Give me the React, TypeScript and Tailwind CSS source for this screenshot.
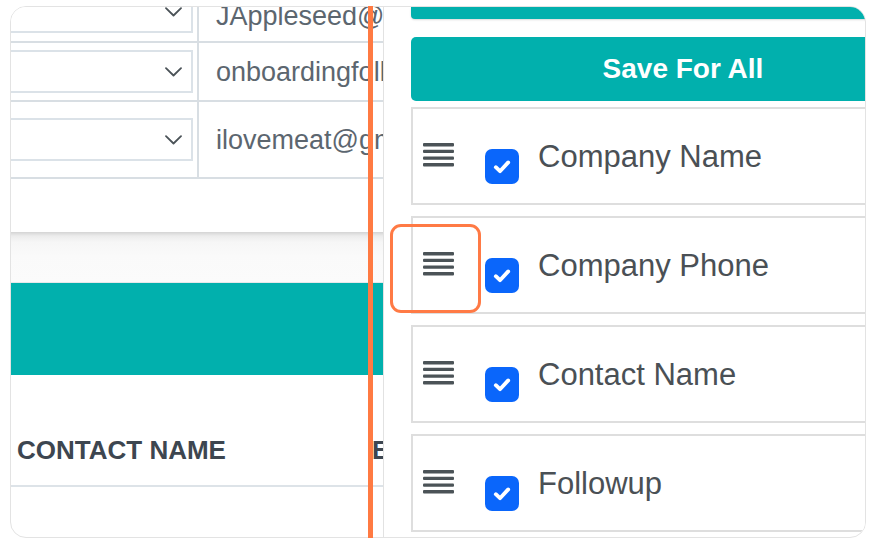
import React from "react";

const FONT = { fontFamily: '"Liberation Sans", Arial, sans-serif' };

function Chevron() {
  return (
    <svg width="17" height="10" viewBox="0 0 17 10" fill="none">
      <path d="M1 1.2 L8.5 8.5 L16 1.2" stroke="#4b5358" strokeWidth="1.8" strokeLinecap="round" strokeLinejoin="round" />
    </svg>
  );
}

function DragIcon() {
  return (
    <svg width="31" height="24" viewBox="0 0 31 24">
      <rect x="0" y="0" width="31" height="3.4" rx="1" fill="#4b5357" />
      <rect x="0" y="6.7" width="31" height="3.4" rx="1" fill="#4b5357" />
      <rect x="0" y="13.4" width="31" height="3.4" rx="1" fill="#4b5357" />
      <rect x="0" y="20.1" width="31" height="3.4" rx="1" fill="#4b5357" />
    </svg>
  );
}

function Check() {
  return (
    <div className="w-[34px] h-[35px] rounded-[7px] bg-[#0a66fb] flex items-center justify-center shrink-0">
      <svg width="34" height="35" viewBox="0 0 34 35" fill="none">
        <path d="M10.8 18.2 L15 22.2 L23.2 13.4" stroke="#ffffff" strokeWidth="3.8" strokeLinecap="round" strokeLinejoin="round" />
      </svg>
    </div>
  );
}

function SelectBox({ extra }: { extra: string }) {
  return (
    <div className={"w-[182px] h-[43px] border-2 border-l-0 border-[#dbe2e8] bg-white flex items-center justify-end pr-[9px] " + extra}>
      <Chevron />
    </div>
  );
}

function Item({ label }: { label: string }) {
  return (
    <div className="h-[98px] w-[480px] border-2 border-[#dedede] bg-white flex items-start pl-[10px]">
      <div className="mt-[34px]">
        <DragIcon />
      </div>
      <div className="ml-[31px] mt-[40px]">
        <Check />
      </div>
      <div className="ml-[19px] mt-[31px] text-[31px] leading-[34px] text-[#4a5055] whitespace-nowrap">{label}</div>
    </div>
  );
}

export default function App() {
  return (
    <div className="w-[871px] h-[547px] bg-white relative overflow-hidden pt-[6px] pl-[10px]" style={FONT}>
      <div className="w-[856px] h-[532px] border border-[#e3e3e3] rounded-[16px] overflow-hidden flex bg-white">
        {/* Left panel */}
        <div className="w-[372px] shrink-0 flex flex-col overflow-hidden">
          {/* Row 1 */}
          <div className="h-[36px] border-b-2 border-[#d8dee3] flex overflow-hidden shrink-0">
            <div className="w-[186px] shrink-0">
              <SelectBox extra="-mt-[17px]" />
            </div>
            <div className="border-l-2 border-[#d8dee3] pl-[17px] flex-1 overflow-hidden whitespace-nowrap text-[27px] leading-[30px] text-[#5c666f]">
              <div className="-mt-[6px]">JAppleseed@gmail.com</div>
            </div>
          </div>
          {/* Row 2 */}
          <div className="h-[59px] border-b-2 border-[#d8dee3] flex items-stretch overflow-hidden shrink-0">
            <div className="w-[186px] shrink-0 flex items-center">
              <SelectBox extra="" />
            </div>
            <div className="border-l-2 border-[#d8dee3] pl-[17px] flex-1 overflow-hidden whitespace-nowrap text-[27px] leading-[30px] text-[#5c666f] flex items-center">
              onboardingfollowup@gmail.com
            </div>
          </div>
          {/* Row 3 */}
          <div className="h-[77px] border-b-2 border-[#d8dee3] flex items-stretch overflow-hidden shrink-0">
            <div className="w-[186px] shrink-0 flex items-center">
              <SelectBox extra="" />
            </div>
            <div className="border-l-2 border-[#d8dee3] pl-[17px] flex-1 overflow-hidden whitespace-nowrap text-[27px] leading-[30px] text-[#5c666f] flex items-center">
              ilovemeat@gmail.com
            </div>
          </div>
          {/* spacer */}
          <div className="h-[53px] shrink-0 bg-white" />
          {/* shadow area */}
          <div className="h-[51px] shrink-0 bg-[linear-gradient(to_bottom,#d4d4d4_0px,#ececec_4px,#f6f6f6_10px,#fafafa_24px,#fbfbfb_100%)] border-b border-[#e6e8ea]" />
          {/* teal bar */}
          <div className="h-[92px] shrink-0 bg-[#01b0ad]" />
          {/* header */}
          <div className="h-[112px] shrink-0 border-b-2 border-[#dde3e8] flex items-end pb-[20px] overflow-hidden whitespace-nowrap">
            <div className="pl-[6px] text-[26px] leading-[30px] font-bold text-[#3d4650] w-[361px] shrink-0">CONTACT NAME</div>
            <div className="text-[26px] leading-[30px] font-bold text-[#3d4650]">EMAIL</div>
          </div>
          <div className="flex-1" />
        </div>
        {/* Right panel */}
        <div className="flex-1 border-l-[1.5px] border-[#e2e2e2] overflow-hidden pl-[27px] flex flex-col">
          <div className="h-[12px] w-[480px] shrink-0 bg-[#01b0ad] rounded-b-[4px] shadow-[0_1px_2px_rgba(0,0,0,0.15)]" />
          <div className="mt-[18px] h-[64px] w-[480px] shrink-0 bg-[#01b0ad] rounded-[5px] flex items-center overflow-hidden">
            <div className="w-[544px] shrink-0 text-center text-white font-bold text-[28px] leading-[32px]">Save For All</div>
          </div>
          <div className="mt-[6px] flex flex-col gap-[11px]">
            <Item label="Company Name" />
            <Item label="Company Phone" />
            <Item label="Contact Name" />
            <Item label="Followup" />
          </div>
        </div>
      </div>
      {/* Annotations */}
      <div className="absolute left-[368px] top-[6px] w-[5px] h-[532px] bg-[#ff7a42]" />
      <div className="absolute left-[390px] top-[224px] w-[91px] h-[89px] border-[3px] border-[#ff7a45] rounded-[11px]" />
    </div>
  );
}
